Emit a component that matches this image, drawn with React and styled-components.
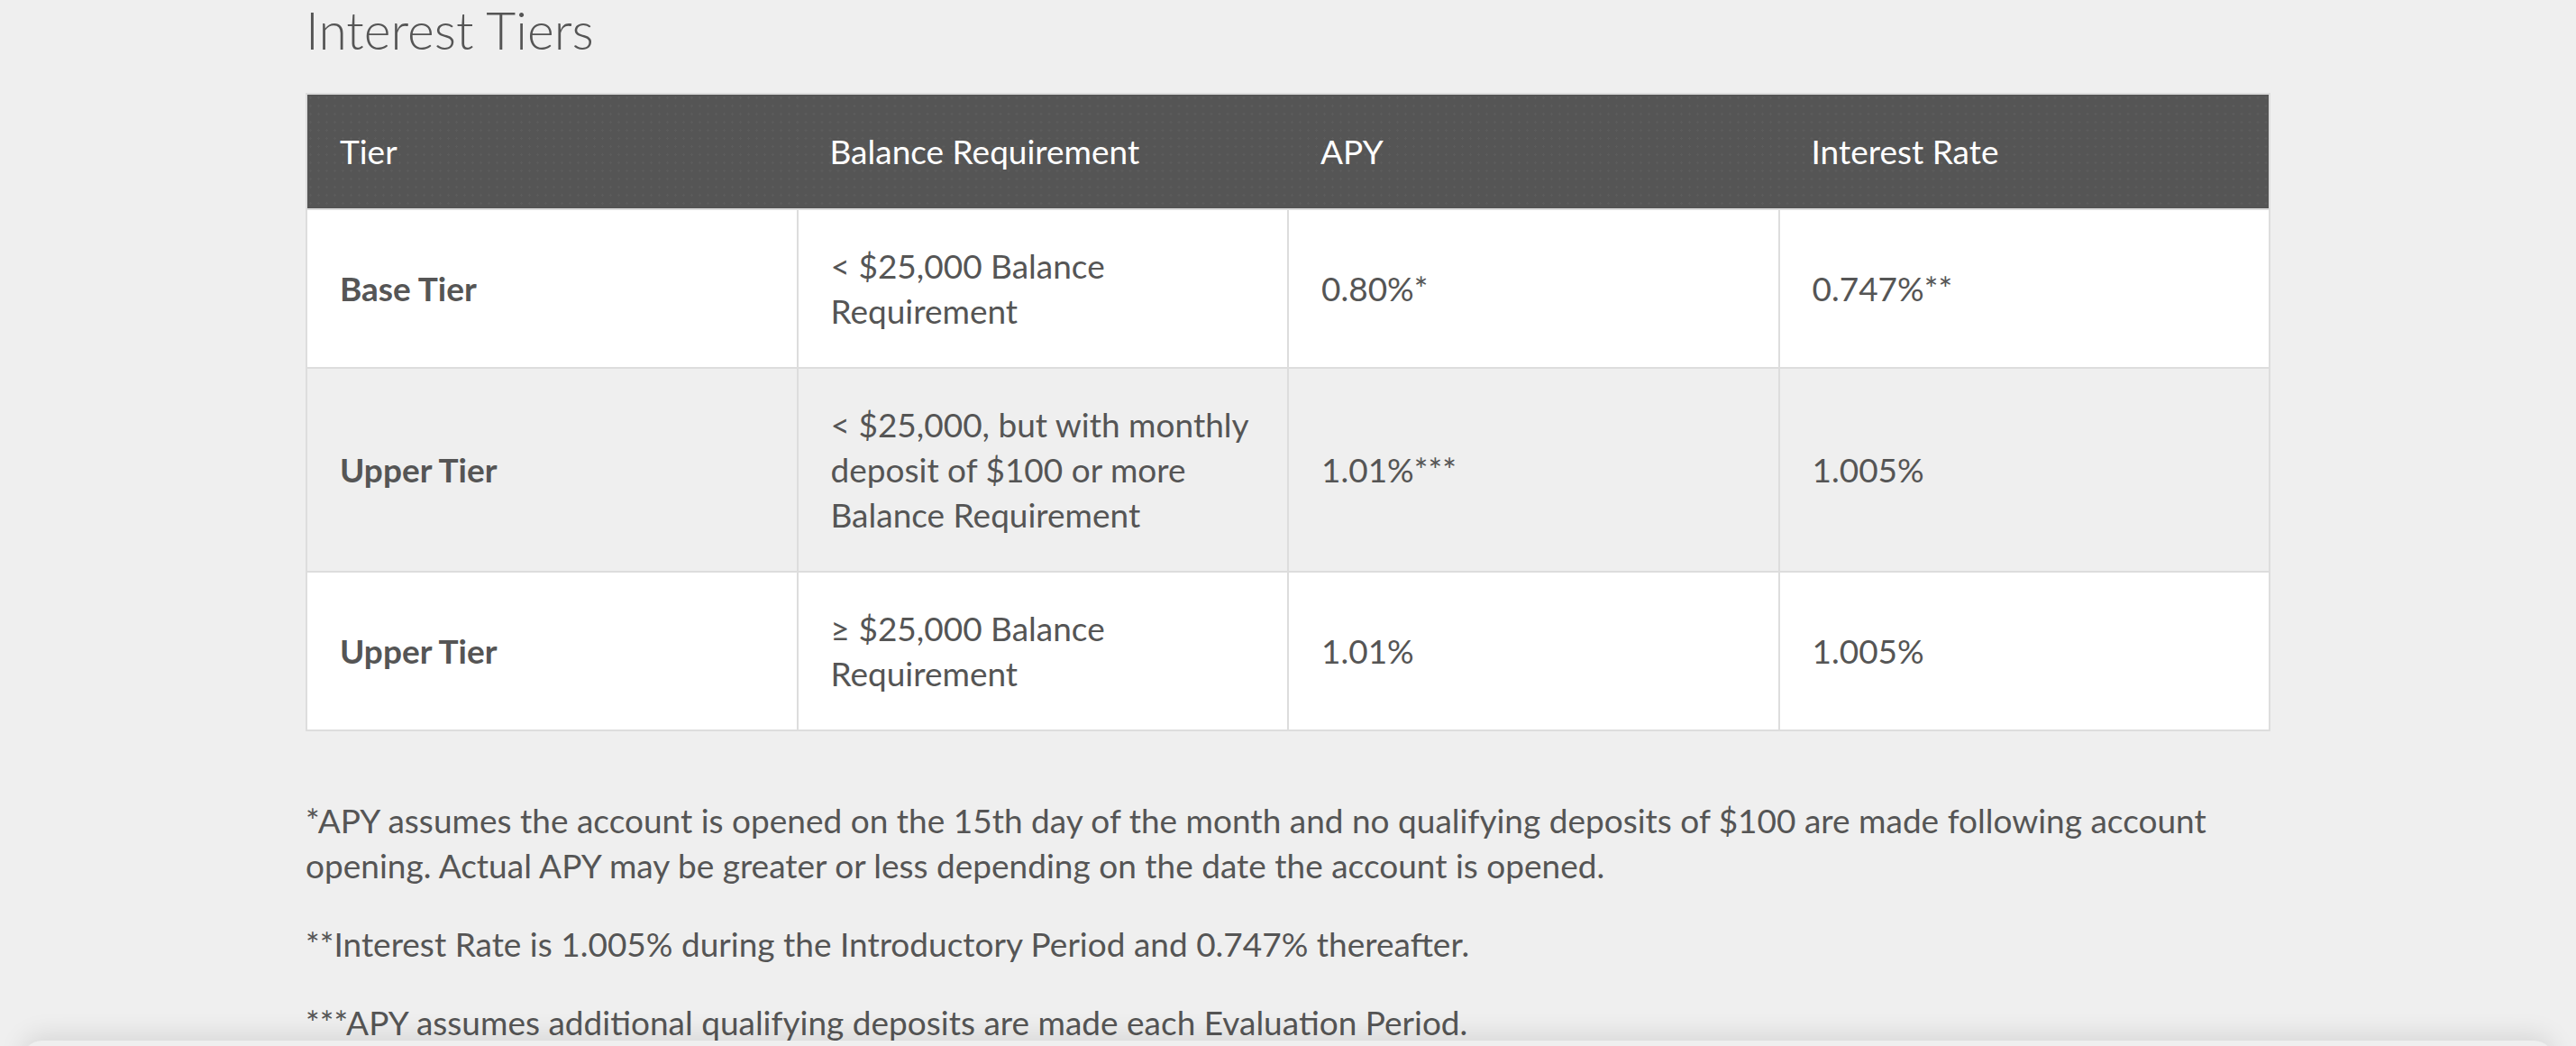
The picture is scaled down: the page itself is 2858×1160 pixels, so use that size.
import React from "react";
import styled, { createGlobalStyle } from "styled-components";

const GlobalStyle = createGlobalStyle`
  html, body {
    margin: 0;
    padding: 0;
    background: #efefef;
  }
  body {
    font-family: Lato, "Open Sans", Arial, sans-serif;
    color: #555555;
    overflow: hidden;
  }
`;

const Page = styled.main`
  max-width: 2180px;
  margin: 0 auto;
  padding: 0;
`;

const Heading = styled.h2`
  margin: 0 0 37px 0;
  font-size: 57px;
  line-height: 66px;
  font-weight: 300;
  color: #555555;
`;

const Table = styled.table`
  width: 100%;
  border-collapse: collapse;
  table-layout: fixed;
  border: 2px solid #dddddd;
`;

const HeadRow = styled.tr`
  background-color: #555555;
  background-image: radial-gradient(rgba(255, 255, 255, 0.045) 1px, transparent 1.3px);
  background-size: 9px 9px;
`;

const HeadCell = styled.th`
  text-align: left;
  font-weight: 400;
  color: #ffffff;
  font-size: 37px;
  line-height: 50px;
  padding: 38px 36px;
`;

const BodyRow = styled.tr`
  background: ${(p) => (p.$alt ? "#efefef" : "#ffffff")};
  border-top: 2px solid #dddddd;
`;

const Cell = styled.td`
  font-size: 37px;
  line-height: 50px;
  padding: 37px 36px;
  vertical-align: middle;
  border-left: ${(p) => (p.$first ? "none" : "2px solid #dddddd")};
  font-weight: ${(p) => (p.$strong ? 700 : 400)};
  color: #555555;
`;

const Notes = styled.section`
  margin-top: 74px;
`;

const Note = styled.p`
  margin: 0 0 37px 0;
  font-size: 37px;
  line-height: 50px;
  color: #555555;
`;

const BottomShade = styled.div`
  position: fixed;
  left: 24px;
  right: 24px;
  bottom: -40px;
  height: 46px;
  border-radius: 24px;
  background: #efefef;
  box-shadow: 0 -6px 28px rgba(0, 0, 0, 0.1);
`;

const rows = [
  { tier: "Base Tier", balance: "< $25,000 Balance Requirement", apy: "0.80%*", rate: "0.747%**" },
  {
    tier: "Upper Tier",
    balance: "< $25,000, but with monthly deposit of $100 or more Balance Requirement",
    apy: "1.01%***",
    rate: "1.005%",
  },
  { tier: "Upper Tier", balance: "\u2265 $25,000 Balance Requirement", apy: "1.01%", rate: "1.005%" },
];

export default function App() {
  return (
    <>
      <GlobalStyle />
      <Page>
        <Heading>Interest Tiers</Heading>
        <Table>
          <thead>
            <HeadRow>
              <HeadCell>Tier</HeadCell>
              <HeadCell>Balance Requirement</HeadCell>
              <HeadCell>APY</HeadCell>
              <HeadCell>Interest Rate</HeadCell>
            </HeadRow>
          </thead>
          <tbody>
            {rows.map((r, i) => (
              <BodyRow key={i} $alt={i === 1}>
                <Cell $first $strong>{r.tier}</Cell>
                <Cell>{r.balance}</Cell>
                <Cell>{r.apy}</Cell>
                <Cell>{r.rate}</Cell>
              </BodyRow>
            ))}
          </tbody>
        </Table>
        <Notes>
          <Note>
            *APY assumes the account is opened on the 15th day of the month and no qualifying deposits of $100 are
            made following account opening. Actual APY may be greater or less depending on the date the account is
            opened.
          </Note>
          <Note>**Interest Rate is 1.005% during the Introductory Period and 0.747% thereafter.</Note>
          <Note>***APY assumes additional qualifying deposits are made each Evaluation Period.</Note>
        </Notes>
      </Page>
      <BottomShade />
    </>
  );
}
